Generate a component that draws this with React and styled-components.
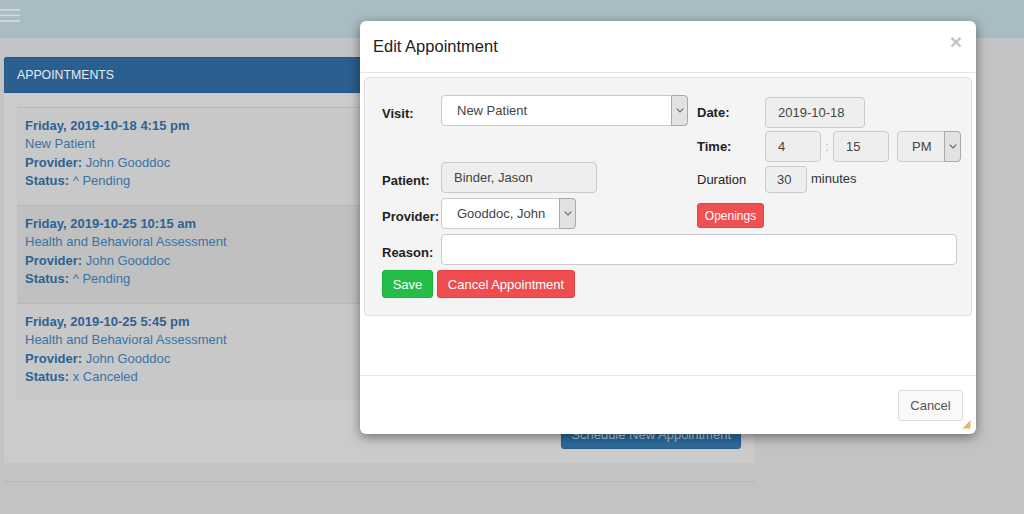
import React from "react";
import styled, { createGlobalStyle } from "styled-components";

const GlobalStyle = createGlobalStyle`
  html, body, #root {
    margin: 0;
    height: 100%;
  }
  body {
    background: #c2c3c5;
    font-family: "Liberation Sans", Arial, sans-serif;
    font-size: 13px;
    overflow: hidden;
  }
  * {
    box-sizing: border-box;
  }
`;

const Page = styled.div`
  position: relative;
  width: 1024px;
  height: 514px;
  overflow: hidden;
`;

const TopBar = styled.div`
  height: 38px;
  background: #a9bbc3;
  display: flex;
  align-items: flex-start;
  padding-top: 9px;
`;

const Content = styled.div`
  padding: 19px 0 0 4px;
`;

const Panel = styled.section`
  width: 751px;
  border-bottom: 1px solid #b3b5b8;
`;

const PanelHeading = styled.div`
  height: 36px;
  background: #2b5f90;
  border: 1px solid #245789;
  border-radius: 2px 2px 0 0;
  color: #e6edf3;
  font-size: 12.3px;
  display: flex;
  align-items: center;
  padding-left: 12px;
`;

const PanelBody = styled.div`
  background: #cbcbcb;
  padding: 14px 14px 14px 13px;
`;

const PanelFooter = styled.div`
  height: 18px;
  background: #c4c4c4;
`;

const Item = styled.div`
  height: ${(p) => p.$h}px;
  background: ${(p) => (p.$active ? "#c0c0c0" : "#c8c8c8")};
  border-top: 1px solid #b9b9b9;
  padding: 9px 8px 0;
  line-height: 18.3px;
  color: #3a73a6;
`;

const Strong = styled.span`
  font-weight: bold;
  color: #2b6396;
`;

const Line = styled.div``;

const ListActions = styled.div`
  display: flex;
  justify-content: flex-end;
  margin-top: 20px;
`;

const BlueButton = styled.button`
  height: 29px;
  padding: 0 9px;
  background: #2d6b9d;
  border: 1px solid #285f8c;
  border-radius: 3px;
  color: #b9cad8;
  font: 13px "Liberation Sans", Arial, sans-serif;
`;

const Modal = styled.div`
  position: absolute;
  left: 360px;
  top: 21px;
  width: 616px;
  height: 413px;
  background: #fff;
  border-radius: 6px;
  box-shadow: 0 3px 12px rgba(0, 0, 0, 0.45);
  display: flex;
  flex-direction: column;
`;

const ModalHeader = styled.div`
  height: 52px;
  flex-shrink: 0;
  border-bottom: 1px solid #e5e5e5;
  display: flex;
  justify-content: space-between;
  padding: 0 14px 0 13px;
`;

const Title = styled.h4`
  margin: 0;
  align-self: center;
  font-size: 16.5px;
  font-weight: normal;
  color: #222;
`;

const Close = styled.span`
  margin-top: 10px;
  font-size: 21px;
  font-weight: bold;
  color: #c4c4c4;
  line-height: 1;
`;

const ModalBody = styled.div`
  flex: 1;
  padding: 4px;
`;

const Well = styled.div`
  background: #f4f4f4;
  border: 1px solid #e0e0e0;
  border-radius: 4px;
  padding: 17px 14px 17px 17px;
`;

const Columns = styled.div`
  display: flex;
`;

const Column = styled.div`
  width: ${(p) => p.$w}px;
  margin-left: ${(p) => p.$ml || 0}px;
  padding-top: ${(p) => p.$pt || 0}px;
  display: flex;
  flex-direction: column;
`;

const Row = styled.div`
  display: flex;
  align-items: center;
  margin-top: ${(p) => p.$mt || 0}px;
`;

const Label = styled.label`
  width: ${(p) => p.$w}px;
  flex-shrink: 0;
  font-weight: ${(p) => (p.$plain ? "normal" : "bold")};
  color: #222;
  padding-top: ${(p) => p.$pt || 0}px;
`;

const Input = styled.input`
  width: ${(p) => p.$w}px;
  height: ${(p) => p.$h || 31}px;
  padding: 0 ${(p) => p.$px || 12}px;
  border: 1px solid #cacaca;
  border-radius: 4px;
  background: ${(p) => (p.$disabled ? "#eeeeee" : "#fff")};
  color: #444;
  font: 13px "Liberation Sans", Arial, sans-serif;
  outline: none;
`;

const SelectBox = styled.div`
  width: ${(p) => p.$w}px;
  height: 31px;
  margin-left: ${(p) => p.$ml || 0}px;
  border: 1px solid #cacaca;
  border-radius: 4px;
  background: ${(p) => (p.$disabled ? "#eeeeee" : "#fff")};
  display: flex;
  align-items: center;
  color: #444;
`;

const SelectValue = styled.span`
  flex: 1;
  padding-left: ${(p) => p.$pl || 15}px;
`;

const Arrow = styled.span`
  width: 17px;
  align-self: stretch;
  margin: -1px -1px -1px 0;
  background: #e2e2e2;
  border: 1px solid #a9a9a9;
  border-radius: 0 4px 4px 0;
  display: flex;
  align-items: center;
  justify-content: center;
`;

const Colon = styled.span`
  width: 12px;
  text-align: center;
  color: #b8b8b8;
`;

const Units = styled.span`
  margin-left: 4px;
  margin-top: -2px;
  color: #333;
`;

const Button = styled.button`
  height: ${(p) => p.$h || 28}px;
  width: ${(p) => p.$w}px;
  padding: 0;
  border: 1px solid ${(p) => p.$border};
  border-radius: 3px;
  background: ${(p) => p.$bg};
  color: ${(p) => p.$color || "#fff"};
  font: ${(p) => p.$fs || 13}px "Liberation Sans", Arial, sans-serif;
`;

const Actions = styled.div`
  display: flex;
  gap: 4px;
  margin-top: 5px;
`;

const ModalFooter = styled.div`
  position: relative;
  height: 59px;
  flex-shrink: 0;
  border-top: 1px solid #e5e5e5;
  display: flex;
  align-items: center;
  justify-content: flex-end;
  padding-right: 13px;
`;

const Grip = styled.svg`
  position: absolute;
  right: 5px;
  bottom: 5px;
`;

const Chevron = () => (
  <svg width="8" height="5" viewBox="0 0 8 5">
    <path d="M0.7 0.7 L4 4 L7.3 0.7" fill="none" stroke="#666" strokeWidth="1.1" />
  </svg>
);

const Hamburger = () => (
  <svg width="20" height="14" viewBox="0 0 20 14">
    <rect x="0" y="0" width="20" height="1.6" fill="#d3dde1" />
    <rect x="0" y="5.6" width="20" height="1.6" fill="#d3dde1" />
    <rect x="0" y="11.2" width="20" height="1.6" fill="#d3dde1" />
  </svg>
);

const appointments = [
  { when: "Friday, 2019-10-18 4:15 pm", visit: "New Patient", status: "^ Pending", h: 98 },
  { when: "Friday, 2019-10-25 10:15 am", visit: "Health and Behavioral Assessment", status: "^ Pending", h: 98, active: true },
  { when: "Friday, 2019-10-25 5:45 pm", visit: "Health and Behavioral Assessment", status: "x Canceled", h: 97 },
];

function App() {
  return (
    <Page>
      <GlobalStyle />
      <TopBar>
        <Hamburger />
      </TopBar>
      <Content>
        <Panel>
          <PanelHeading>APPOINTMENTS</PanelHeading>
          <PanelBody>
            {appointments.map((a) => (
              <Item key={a.when} $h={a.h} $active={a.active}>
                <Line><Strong>{a.when}</Strong></Line>
                <Line>{a.visit}</Line>
                <Line><Strong>Provider:</Strong> John Gooddoc</Line>
                <Line><Strong>Status:</Strong> {a.status}</Line>
              </Item>
            ))}
            <ListActions>
              <BlueButton>Schedule New Appointment</BlueButton>
            </ListActions>
          </PanelBody>
          <PanelFooter />
        </Panel>
      </Content>

      <Modal>
        <ModalHeader>
          <Title>Edit Appointment</Title>
          <Close>×</Close>
        </ModalHeader>
        <ModalBody>
          <Well>
            <Columns>
              <Column $w={306}>
                <Row>
                  <Label $w={59} $pt={5}>Visit:</Label>
                  <SelectBox $w={247}>
                    <SelectValue>New Patient</SelectValue>
                    <Arrow><Chevron /></Arrow>
                  </SelectBox>
                </Row>
                <Row $mt={36}>
                  <Label $w={59} $pt={5}>Patient:</Label>
                  <Input $w={156} $disabled readOnly value="Binder, Jason" />
                </Row>
                <Row $mt={5}>
                  <Label $w={59} $pt={5}>Provider:</Label>
                  <SelectBox $w={135}>
                    <SelectValue>Gooddoc, John</SelectValue>
                    <Arrow><Chevron /></Arrow>
                  </SelectBox>
                </Row>
              </Column>
              <Column $w={264} $ml={9} $pt={2}>
                <Row>
                  <Label $w={68}>Date:</Label>
                  <Input $w={100} $disabled readOnly value="2019-10-18" />
                </Row>
                <Row $mt={3}>
                  <Label $w={68}>Time:</Label>
                  <Input $w={56} $disabled readOnly value="4" />
                  <Colon>:</Colon>
                  <Input $w={56} $disabled readOnly value="15" />
                  <SelectBox $w={64} $ml={8} $disabled>
                    <SelectValue $pl={14}>PM</SelectValue>
                    <Arrow><Chevron /></Arrow>
                  </SelectBox>
                </Row>
                <Row $mt={4}>
                  <Label $w={68} $plain>Duration</Label>
                  <Input $w={42} $h={27} $px={11} $disabled readOnly value="30" />
                  <Units>minutes</Units>
                </Row>
                <Row $mt={10}>
                  <Button $w={67} $h={25} $fs={12} $bg="#f05052" $border="#e54548">
                    Openings
                  </Button>
                </Row>
              </Column>
            </Columns>
            <Row $mt={5}>
              <Label $w={59} $pt={5}>Reason:</Label>
              <Input $w={516} readOnly value="" />
            </Row>
            <Actions>
              <Button $w={51} $bg="#24bd48" $border="#1fae40">Save</Button>
              <Button $w={138} $bg="#ef4d50" $border="#e04145">Cancel Appointment</Button>
            </Actions>
          </Well>
        </ModalBody>
        <ModalFooter>
          <Button $w={65} $h={31} $bg="#f9f9f9" $border="#dcdcdc" $color="#555">
            Cancel
          </Button>
          <Grip width="8" height="8" viewBox="0 0 8 8">
            <path d="M7.5 0.5 L0.5 7.5 M7.5 3 L3 7.5 M7.5 5.5 L5.5 7.5" stroke="#e59b2e" strokeWidth="1.2" />
          </Grip>
        </ModalFooter>
      </Modal>
    </Page>
  );
}

export default App;
